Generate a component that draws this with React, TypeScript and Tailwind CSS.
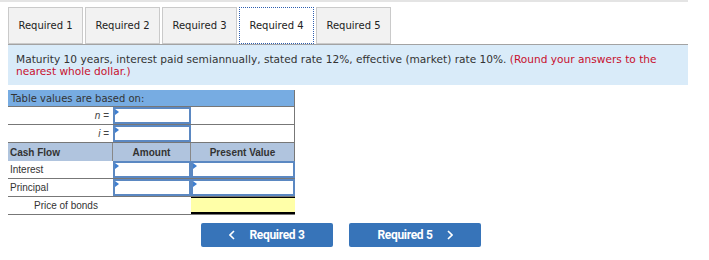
import React from "react";

const tabs = ["Required 1", "Required 2", "Required 3", "Required 4", "Required 5"];

function Field({ arrow = true }: { arrow?: boolean }) {
  return (
    <div className="relative h-full w-full border-2 border-[#5b88c2] bg-white">
      {arrow && (
        <span className="absolute left-0 top-0 h-0 w-0 border-y-[3px] border-l-[4px] border-y-transparent border-l-[#3f7fd0]" />
      )}
    </div>
  );
}

export default function App() {
  const verdana = { fontFamily: '"DejaVu Sans", Verdana, sans-serif' };
  const arial = { fontFamily: '"Liberation Sans", Arial, sans-serif' };
  return (
    <div className="relative h-[260px] w-[709px] overflow-hidden bg-white">
      <div className="h-[2px] w-[688px] bg-[#e4e4e4]" />
      <div className="ml-[8px] mt-[5px] w-[680px]">
        {/* tab strip */}
        <div className="flex gap-[2px] border-b border-[#a3a3a3]" style={verdana}>
          {tabs.map((t, i) => (
            <div
              key={t}
              className={
                i === 3
                  ? "flex h-[37px] w-[75px] items-center justify-center border border-dotted border-[#2f5fb0] bg-white text-[10px] text-[#222]"
                  : "flex h-[37px] w-[75px] items-center justify-center border border-[#cacaca] bg-[#f2f2f2] text-[10px] text-[#222]"
              }
            >
              {t}
            </div>
          ))}
        </div>
        {/* instructions */}
        <div className="h-[40px] bg-[#d9ebf9] px-[8px] pt-[8px] text-[10.6px] leading-[12px] text-[#333]" style={verdana}>
          Maturity 10 years, interest paid semiannually, stated rate 12%, effective (market) rate 10%.{" "}
          <span className="text-[#c8102e]">(Round your answers to the nearest whole dollar.)</span>
        </div>

        {/* present value table */}
        <div className="mt-[5px] w-[287px] text-[10px] text-[#333]" style={arial}>
          <div className="flex h-[17px] items-center border-b border-r border-[#777] bg-[#77ace2] pl-[3px] text-[10px]" style={verdana}>
            Table values are based on:
          </div>
          <div className="grid h-[18px] grid-cols-[105px_78px_104px] border-b border-[#777]">
            <div className="flex items-center justify-end pr-[4px] italic text-[#444]">
              n<span className="not-italic">&nbsp;=</span>
            </div>
            <Field />
            <div className="border-r border-[#777]" />
          </div>
          <div className="grid h-[18px] grid-cols-[105px_78px_104px] border-b border-[#777]">
            <div className="flex items-center justify-end pr-[4px] italic text-[#444]">
              i<span className="not-italic">&nbsp;=</span>
            </div>
            <Field />
            <div className="border-r border-[#777]" />
          </div>
          <div className="grid h-[18px] grid-cols-[105px_78px_104px] bg-[#b0c4de] font-bold">
            <div className="flex items-center border-r border-[#888] pl-[2px]">Cash Flow</div>
            <div className="flex items-center justify-center border-r border-[#888]">Amount</div>
            <div className="flex items-center justify-center border-r border-[#777]">Present Value</div>
          </div>
          <div className="grid h-[18px] grid-cols-[105px_78px_104px] border-b border-[#777]">
            <div className="flex items-center pl-[2px]">Interest</div>
            <Field />
            <Field />
          </div>
          <div className="grid h-[18px] grid-cols-[105px_78px_104px] border-b border-[#777]">
            <div className="flex items-center pl-[2px]">Principal</div>
            <Field />
            <Field />
          </div>
          <div className="grid h-[18px] grid-cols-[183px_104px] border-b border-[#777]">
            <div className="flex items-center pl-[26px]">Price of bonds</div>
            <div className="border-b-2 border-t border-black bg-[#ffffa8]" />
          </div>
        </div>

        {/* navigation */}
        <div className="ml-[193px] mt-[8px] flex gap-[16px] text-[12px] font-bold text-white" style={{ fontFamily: "Roboto, sans-serif" }}>
          <button className="flex h-[24px] w-[132px] items-center justify-center gap-[14px] rounded-[2px] bg-[#3774b9] tracking-[-0.3px]">
            <svg width="6" height="10" viewBox="0 0 6 10" fill="none" stroke="white" strokeWidth="1.6">
              <path d="M5 1 L1 5 L5 9" />
            </svg>
            Required 3
          </button>
          <button className="flex h-[24px] w-[132px] items-center justify-center gap-[14px] rounded-[2px] bg-[#3774b9] tracking-[-0.3px]">
            Required 5
            <svg width="6" height="10" viewBox="0 0 6 10" fill="none" stroke="white" strokeWidth="1.6">
              <path d="M1 1 L5 5 L1 9" />
            </svg>
          </button>
        </div>
      </div>
    </div>
  );
}
